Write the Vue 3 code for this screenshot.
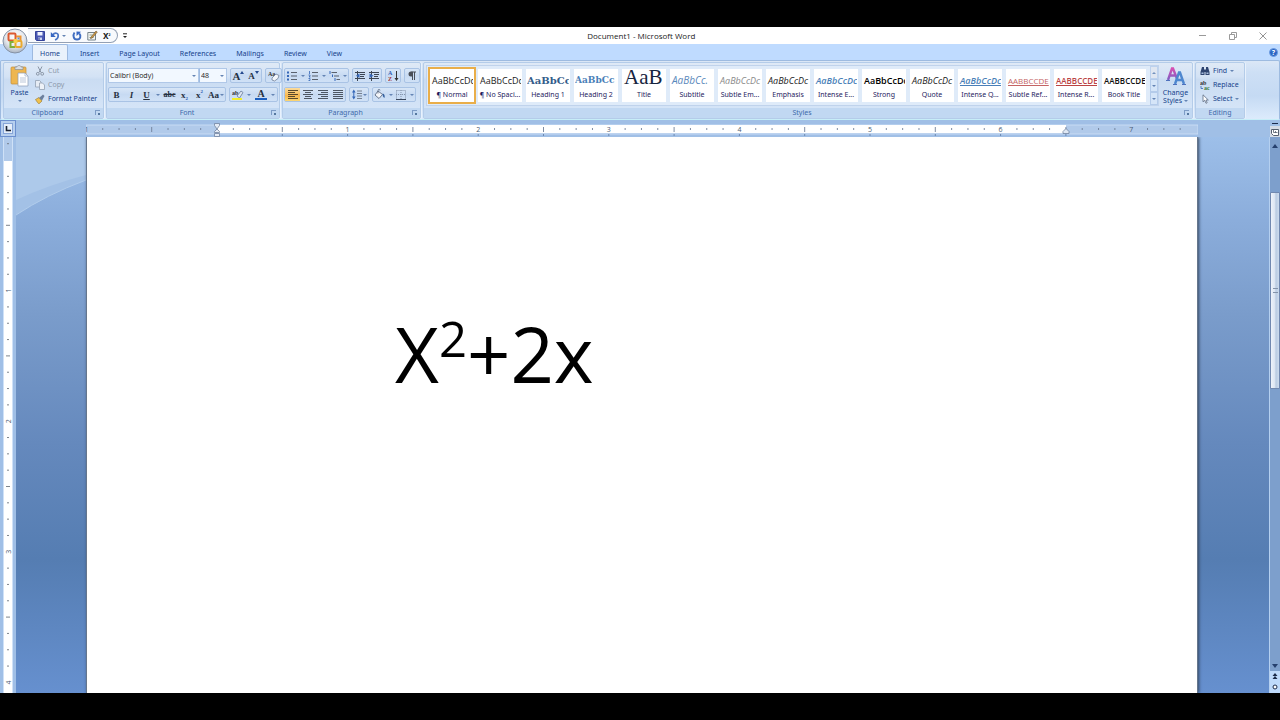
<script setup>
import { ref } from 'vue'

const tabs = ['Home', 'Insert', 'Page Layout', 'References', 'Mailings', 'Review', 'View']
const fontName = ref('Calibri (Body)')
const fontSize = ref('48')

const styles = [
  { name: '¶ Normal', sample: 'AaBbCcDc', kind: 'plain', on: true },
  { name: '¶ No Spaci...', sample: 'AaBbCcDc', kind: 'plain' },
  { name: 'Heading 1', sample: 'AaBbCc', kind: 'h1' },
  { name: 'Heading 2', sample: 'AaBbCc', kind: 'h2' },
  { name: 'Title', sample: 'AaB', kind: 'title' },
  { name: 'Subtitle', sample: 'AaBbCc.', kind: 'subtitle' },
  { name: 'Subtle Em...', sample: 'AaBbCcDc', kind: 'subtle' },
  { name: 'Emphasis', sample: 'AaBbCcDc', kind: 'emph' },
  { name: 'Intense E...', sample: 'AaBbCcDc', kind: 'intense' },
  { name: 'Strong', sample: 'AaBbCcDc', kind: 'strong' },
  { name: 'Quote', sample: 'AaBbCcDc', kind: 'emph' },
  { name: 'Intense Q...', sample: 'AaBbCcDc', kind: 'intense lined' },
  { name: 'Subtle Ref...', sample: 'AABBCCDE', kind: 'ref' },
  { name: 'Intense R...', sample: 'AABBCCDE', kind: 'ref heavy' },
  { name: 'Book Title', sample: 'AABBCCDE', kind: 'book' },
]

const inch = 130.6
function ticks(from, to) {
  const out = []
  for (let i = from; i <= to; i++) {
    out.push({ at: (i * inch) / 8, half: i % 4 === 0, num: i % 8 === 0 && i !== 0 ? Math.abs(i / 8) : 0, zero: i === 0 })
  }
  return out
}
const across = ticks(-8, 59)
const down = ticks(-1, 33)
</script>

<template>
  <div class="screen">
    <div class="window">
      <header class="titlebar">
        <button class="office" aria-label="Office Button">
          <svg viewBox="0 0 26 26" width="26" height="26">
            <defs>
              <radialGradient id="orb" cx=".5" cy=".35" r=".65">
                <stop offset="0" stop-color="#fff" /><stop offset=".6" stop-color="#e4e7ec" /><stop offset="1" stop-color="#a9b3c2" />
              </radialGradient>
            </defs>
            <circle cx="13" cy="13" r="12" fill="url(#orb)" stroke="#8592a6" />
            <g fill="none" stroke-width="2">
              <rect x="6.500" y="5.500" width="7" height="7" rx="1" stroke="#dc5a31" />
              <path d="M14 8.500h4.500v4.500H15" stroke="#ec9432" />
              <path d="M12 14H8.500v5h4.500" stroke="#7fae3a" />
              <rect x="13.500" y="13" width="6" height="6" rx="1" stroke="#e9a92f" />
            </g>
            <rect x="11.500" y="11" width="4" height="4" fill="#f7d04a" />
            <path d="M15.500 9.500h2v2h-2z" fill="#5b93d0" />
          </svg>
        </button>
        <div class="quick">
          <button aria-label="Save">
            <svg viewBox="0 0 10 10" width="10" height="10"><path d="M.5.5h9v9h-8l-1-1z" fill="#4a58b4" stroke="#34439a" /><path d="M2.500 1h5v3.500h-5z" fill="#eef2ff" /><path d="M3 6.500h4V9H3z" fill="#c9d2ef" /><path d="M3.500 7h1v2h-1z" fill="#273583" /></svg>
          </button>
          <button aria-label="Undo">
            <svg viewBox="0 0 10 10" width="10" height="10"><path d="M2.500 4C5 1 8.500 2 8.200 5 8 7.500 6.500 8.500 5 9" fill="none" stroke="#4a75c4" stroke-width="1.700" /><path d="M.8 1v5h5z" fill="#3767c3" /></svg>
          </button>
          <button class="slim" aria-label="Undo list"><i class="caret"></i></button>
          <button aria-label="Repeat">
            <svg viewBox="0 0 10 10" width="10" height="10"><path d="M2.500 1.500C.8 4 1.200 8.400 5 8.500 8.800 8.400 9.200 4.500 7.200 2.500" fill="none" stroke="#3f6dc0" stroke-width="1.900" /><path d="M4.500.5v4.500L9 .8z" fill="#3767c3" /></svg>
          </button>
          <button aria-label="Edit">
            <svg viewBox="0 0 11 11" width="11" height="11"><path d="M.8 2.500h7.700v7.500H.8z" fill="#f3f5f2" stroke="#76838a" /><path d="M2.500 5h3M2.500 7.500h4" stroke="#8fa08f" /><path d="M4 7l5-6 1.300 1-5 6L3.500 8.500z" fill="#d09a40" stroke="#66533a" stroke-width=".6" /></svg>
          </button>
          <button class="glyph" aria-label="Superscript">x<sup>²</sup></button>
        </div>
        <button class="more" aria-label="Customize toolbar">
          <svg viewBox="0 0 6 6" width="6" height="6"><path d="M1 .8h4" stroke="#222" /><path d="M1 3h4L3 5z" fill="#222" /></svg>
        </button>
        <h1>Document1 - Microsoft Word</h1>
        <div class="controls">
          <button aria-label="Minimize"><svg viewBox="0 0 8 8" width="8" height="8"><path d="M0 3.500h7" stroke="#999" /></svg></button>
          <button aria-label="Restore"><svg viewBox="0 0 8 8" width="8" height="8"><path d="M.5 2.500h5v5h-5zM2.500 2V.5h5v5H6" fill="none" stroke="#999" /></svg></button>
          <button aria-label="Close"><svg viewBox="0 0 8 8" width="8" height="8"><path d="M.5.5l7 7M7.500.5l-7 7" stroke="#888" stroke-width=".9" /></svg></button>
        </div>
      </header>

      <nav class="tabs">
        <button v-for="(t, i) in tabs" :key="t" :class="{ active: i === 0 }">{{ t }}</button>
        <button class="help" aria-label="Help">?</button>
      </nav>

      <section class="ribbon">
        <div class="group clipboard">
          <div class="body">
            <button class="paste">
              <svg viewBox="0 0 20 22" width="20" height="22"><rect x="1" y="2" width="15" height="17" rx="1" fill="#eeb64f" stroke="#c18e3a" stroke-width=".7" /><path d="M5 3.500V2h2c0-2 4-2 4 0h2v2.500H5z" fill="#d9dde2" stroke="#7c8591" stroke-width=".6" /><path d="M8 8h7l3 3v10H8z" fill="#fff" stroke="#8b9cb6" stroke-width=".7" /><path d="M15 8v3h3M10 13h6M10 15h6M10 17h6" fill="none" stroke="#9fb0c9" stroke-width=".7" /></svg>
              <span>Paste</span>
              <i class="caret"></i>
            </button>
            <div class="list">
              <button class="off"><svg viewBox="0 0 10 10" width="10" height="10"><path d="M3 .5l3 6M7 .5l-3 6" stroke="#8a96a6" /><circle cx="2.800" cy="7.800" r="1.400" fill="none" stroke="#8a96a6" /><circle cx="7.200" cy="7.800" r="1.400" fill="none" stroke="#8a96a6" /></svg>Cut</button>
              <button class="off"><svg viewBox="0 0 10 10" width="10" height="10"><path d="M.5.5h4l1.500 1.500v5H.5z" fill="#e6ecf4" stroke="#94a1b3" stroke-width=".8" /><path d="M4.500 3h3l2 2v4.500h-5z" fill="#eef2f8" stroke="#94a1b3" stroke-width=".8" /></svg>Copy</button>
              <button><svg viewBox="0 0 10 10" width="10" height="10"><path d="M.5 5.500L4 3.500l3 3.500-3 2.800c-1-.4-2-2-3.500-4.300z" fill="#f1c14e" stroke="#94762c" stroke-width=".6" /><path d="M4 4l4-3.500L9.500 2 7 6.500z" fill="#6b7f9d" /></svg>Format Painter</button>
            </div>
          </div>
          <footer>Clipboard<i class="launch"></i></footer>
        </div>

        <div class="group font">
          <div class="body rows">
            <div class="row">
              <div class="combos">
                <label class="pick name"><select v-model="fontName" aria-label="Font"><option>Calibri (Body)</option></select><i class="caret"></i></label>
                <label class="pick size"><select v-model="fontSize" aria-label="Font size"><option>48</option></select><i class="caret"></i></label>
              </div>
              <div class="set">
                <button class="serif big" aria-label="Grow font">A<svg viewBox="0 0 4 4" width="4" height="4"><path d="M0 3l2-3 2 3z" fill="#244a8f" /></svg></button>
                <button class="serif" aria-label="Shrink font">A<svg viewBox="0 0 4 4" width="4" height="4"><path d="M0 0h4L2 3z" fill="#244a8f" /></svg></button>
              </div>
              <div class="set">
                <button aria-label="Clear formatting"><svg viewBox="0 0 12 12" width="12" height="12"><text x="0" y="6" class="tiny">Aa</text><path d="M4 8l4-4 3 1.500-1 3L6.500 11 4 10z" fill="#f3f6fb" stroke="#6f7f98" stroke-width=".8" /></svg></button>
              </div>
            </div>
            <div class="row">
              <div class="set">
                <button class="serif bold">B</button>
                <button class="serif ital">I</button>
                <button class="serif under">U</button>
                <button class="slim" aria-label="Underline style"><i class="caret"></i></button>
                <button class="serif strike">abc</button>
                <button class="serif">x<sub>2</sub></button>
                <button class="serif">x<sup>2</sup></button>
                <button class="serif wide">Aa<i class="caret"></i></button>
              </div>
              <div class="set">
                <button aria-label="Highlight"><svg viewBox="0 0 12 12" width="12" height="12"><text x="0" y="6" class="tiny">ab</text><path d="M5 7l4-5 2 1.500L7.500 9z" fill="#dfe6f2" stroke="#566b8c" stroke-width=".7" /><path d="M0 9h10v2H0z" fill="#f2ee2b" /></svg></button>
                <button class="slim" aria-label="Highlight color"><i class="caret"></i></button>
                <button class="serif ink">A</button>
                <button class="slim" aria-label="Font color list"><i class="caret"></i></button>
              </div>
            </div>
          </div>
          <footer>Font<i class="launch"></i></footer>
        </div>

        <div class="group para">
          <div class="body rows">
            <div class="row">
              <div class="set">
                <button aria-label="Bullets"><svg viewBox="0 0 10 10" width="10" height="10"><path d="M0 1.500h2M0 5h2M0 8.500h2" stroke="#3567b8" stroke-width="1.800" /><path d="M4 1.500h6M4 5h6M4 8.500h6" stroke="#59616d" /></svg></button>
                <button class="slim" aria-label="Bullet list"><i class="caret"></i></button>
                <button aria-label="Numbering"><svg viewBox="0 0 10 10" width="10" height="10"><path d="M1.500 0v3M.5 4h1.500v1l-1 1h1.500M.5 7.500h1.500v2H.5" fill="none" stroke="#3567b8" stroke-width=".8" /><path d="M4 1.500h6M4 5h6M4 8.500h6" stroke="#59616d" /></svg></button>
                <button class="slim" aria-label="Numbering list"><i class="caret"></i></button>
                <button aria-label="Multilevel list"><svg viewBox="0 0 11 10" width="11" height="10"><path d="M1 0v3M3.500 3.500v2.500M6 7v3" stroke="#3567b8" /><path d="M2.500 1.500H8M5 5h5M7.500 8.500H11" stroke="#59616d" /></svg></button>
                <button class="slim" aria-label="Multilevel options"><i class="caret"></i></button>
              </div>
              <div class="set">
                <button aria-label="Decrease indent"><svg viewBox="0 0 10 10" width="10" height="10"><path d="M0 1.500h10M5 3.500h5M5 5.500h4M0 7.500h10M2.500 0v10" stroke="#3d4653" /><path d="M4.500 2.500v4.500L1 4.800z" fill="#3567b8" /></svg></button>
                <button aria-label="Increase indent"><svg viewBox="0 0 10 10" width="10" height="10"><path d="M0 1.500h10M5 3.500h5M5 5.500h4M0 7.500h10M2.500 0v10" stroke="#3d4653" /><path d="M.5 2.500v4.500L4.500 4.800z" fill="#3567b8" /></svg></button>
              </div>
              <div class="set">
                <button aria-label="Sort"><svg viewBox="0 0 11 12" width="11" height="12"><text x="0" y="5" class="tiny blue">A</text><text x="0" y="11" class="tiny red">Z</text><path d="M8.500 1v9" stroke="#333" /><path d="M6.500 8h4l-2 3z" fill="#333" /></svg></button>
              </div>
              <div class="set"><button class="mark" aria-label="Show marks"><svg viewBox="0 0 8 10" width="8" height="10"><path d="M3.500 1H8M4.500 1v8M6.500 1v8" stroke="#4a4f58" /><path d="M4.500.5v5H3A2.500 2.500 0 0 1 3 .5z" fill="#4a4f58" /></svg></button></div>
            </div>
            <div class="row">
              <div class="set aligns">
                <button class="chosen" aria-label="Align left"><svg viewBox="0 0 10 9" width="10" height="9"><path d="M0 .5h10M0 2.500h7M0 4.500h10M0 6.500h7M0 8.500h10" stroke="#5c4a2c" /></svg></button>
                <button aria-label="Center"><svg viewBox="0 0 10 9" width="10" height="9"><path d="M0 .5h10M2 2.500h6M0 4.500h10M2 6.500h6M1 8.500h8" stroke="#4d5663" /></svg></button>
                <button aria-label="Align right"><svg viewBox="0 0 10 9" width="10" height="9"><path d="M0 .5h10M3 2.500h7M0 4.500h10M3 6.500h7M0 8.500h10" stroke="#4d5663" /></svg></button>
                <button aria-label="Justify"><svg viewBox="0 0 10 9" width="10" height="9"><path d="M0 .5h10M0 2.500h10M0 4.500h10M0 6.500h10M0 8.500h10" stroke="#4d5663" /></svg></button>
              </div>
              <div class="set">
                <button class="wide" aria-label="Line spacing"><svg viewBox="0 0 10 11" width="10" height="11"><path d="M1.800 2v7" stroke="#3567b8" /><path d="M0 3.500L1.800.5l1.800 3zM0 7.500l1.800 3 1.800-3z" fill="#3567b8" /><path d="M5 2h5M5 4.500h5M5 7h5M5 9.500h5" stroke="#6b7583" stroke-width=".9" /></svg><i class="caret"></i></button>
              </div>
              <div class="set">
                <button aria-label="Shading"><svg viewBox="0 0 12 11" width="12" height="11"><path d="M4 2l4.500 3.500L5 9.500 1 6z" fill="#f4f6fa" stroke="#5c6b82" stroke-width=".9" /><path d="M4 4.500V1.500c0-1.500 2-1.500 2 0" fill="none" stroke="#5c6b82" stroke-width=".8" /><path d="M8.500 4.500c2 .5 2.500 2 2 4.500-1.500-1-2-2.500-2-4.500z" fill="#35619f" /></svg></button>
                <button class="slim" aria-label="Shading color"><i class="caret"></i></button>
                <button aria-label="Borders"><svg viewBox="0 0 10 10" width="10" height="10"><path d="M.5.5h9v9M.5.500v9M5 0v9M0 4.500h10" fill="none" stroke="#8494ac" stroke-dasharray="1 1" /><path d="M0 9.500h10" stroke="#39475d" /></svg></button>
                <button class="slim" aria-label="Border list"><i class="caret"></i></button>
              </div>
            </div>
          </div>
          <footer>Paragraph<i class="launch"></i></footer>
        </div>

        <div class="group styles">
          <div class="body">
            <div class="gallery">
              <button v-for="s in styles" :key="s.name" class="cell" :class="{ on: s.on }">
                <span class="sample" :class="s.kind">{{ s.sample }}</span>
                <span class="label">{{ s.name }}</span>
              </button>
              <div class="scroller">
                <button class="dim" aria-label="Scroll up"><i class="caret up"></i></button>
                <button aria-label="Scroll down"><i class="caret"></i></button>
                <button aria-label="More styles"><i class="caret lined-top"></i></button>
              </div>
            </div>
            <button class="change">
              <svg viewBox="0 0 20 20" width="20" height="20"><defs><linearGradient id="pinkA" x2="0" y2="1"><stop stop-color="#d64fb2" /><stop offset="1" stop-color="#7d5fc4" /></linearGradient></defs><path d="M2 14L6 2.500h1L11.500 14M3.500 9.500h6" fill="none" stroke="url(#pinkA)" stroke-width="2.400" /><path d="M9 18L13 6.500h1L18 18M10.500 14h7" fill="none" stroke="#4e87cf" stroke-width="2.400" /><path d="M7 18.500h4M16 18.500h4M0 14.500h4" stroke="#4e70bd" /></svg>
              <span>Change</span>
              <span>Styles <i class="caret"></i></span>
            </button>
          </div>
          <footer>Styles<i class="launch"></i></footer>
        </div>

        <div class="group editing">
          <div class="body list">
            <button><svg viewBox="0 0 10 10" width="10" height="10"><path d="M2 1h2v2l1 1 1-1V1h2l1.500 5v3h-4V6h-1v3h-4V6z" fill="#2e4470" /><path d="M1.500 6.500h2v1.500h-2zM6.500 6.500h2v1.500h-2z" fill="#a9bfdf" /></svg>Find <i class="caret"></i></button>
            <button><svg viewBox="0 0 10 10" width="10" height="10"><text x="0" y="5" class="tiny">ab</text><text x="4" y="10" class="tiny green">ac</text><path d="M1 6v2.500h2" fill="none" stroke="#3567b8" stroke-width=".8" /></svg>Replace</button>
            <button><svg viewBox="0 0 10 10" width="10" height="10"><path d="M3 .8v7l1.700-1.500L6 9.300l1.200-.6L6 6h2.300z" fill="#fff" stroke="#5b6a82" stroke-width=".8" /></svg>Select <i class="caret"></i></button>
          </div>
          <footer>Editing</footer>
        </div>
      </section>

      <main class="work">
        <div class="corner"><button aria-label="Tab selector"><svg viewBox="0 0 6 6" width="6" height="6"><path d="M1.500 0v4.500H6" fill="none" stroke="#1a2233" stroke-width="1.600" /></svg></button></div>
        <div class="hruler">
          <div class="scale">
            <svg width="100%" height="17">
              <rect x="0" y="5" width="100%" height="9" fill="#b1caea" stroke="#cfe1f7" stroke-width=".8" />
              <rect x="131" y="5" width="849" height="8" fill="#fff" />
              <g transform="translate(131 0)">
                <template v-for="t in across" :key="t.at">
                  <text v-if="t.num" :x="t.at" y="12" class="num">{{ t.num }}</text>
                  <path v-else-if="!t.zero" :d="t.half ? `M${t.at} 7v5` : `M${t.at} 8v2`" stroke="#6f7f98" stroke-width=".9" />
                </template>
                <path v-for="n in 13" :key="n" :d="`M${n * 65.3} 14v2`" stroke="#6c88b0" />
                <path d="M-2.500 3.500h5v2L0 9l-2.500-3.500zM0 9l2.500 2.500v1h-5v-1zM-2.500 13.500h5v3h-5z" fill="#e4ebf5" stroke="#71839f" stroke-width=".8" />
                <path d="M849 8.500l3 3v2h-6v-2z" fill="#dfe8f4" stroke="#71839f" stroke-width=".8" />
              </g>
            </svg>
          </div>
        </div>
        <div class="split"><b></b><button aria-label="View ruler"><svg viewBox="0 0 8 8" width="8" height="8"><path d="M.5 1.500h7v6h-5l-2-2z" fill="#fff" stroke="#56606f" /><path d="M2.500 2v2.500h4M4.500 3v2" fill="none" stroke="#56606f" stroke-width=".8" /></svg></button></div>
        <div class="vruler">
          <svg width="16" height="100%">
            <rect x="3" y="0" width="10" height="100%" fill="#cfe1f7" />
            <rect x="4" y="0" width="8" height="24" fill="#b1caea" />
            <rect x="4" y="24" width="8" height="100%" fill="#fff" />
            <g transform="translate(8 23)">
              <template v-for="t in down" :key="t.at">
                <text v-if="t.num" class="num" :transform="`translate(3 ${t.at}) rotate(-90)`">{{ t.num }}</text>
                <path v-else-if="!t.zero" :d="t.half ? `M-2 ${t.at}h4` : `M-1 ${t.at}h2`" stroke="#6f7780" stroke-width=".9" />
              </template>
            </g>
          </svg>
        </div>
        <div class="canvas">
          <svg class="swoosh" viewBox="0 0 70 80" width="70" height="80">
            <path d="M0 0h70v43Q30 58 0 78z" fill="#a3c1e6" />
            <path d="M0 0h70v38Q32 48 0 63z" fill="#adc9ea" />
            <path d="M0 78Q30 58 70 43" fill="none" stroke="#b2cdec" />
          </svg>
          <article class="page">
            <p contenteditable="true" spellcheck="false">X<sup>2</sup>+2x</p>
          </article>
        </div>
        <div class="vscroll">
          <button class="up" aria-label="Scroll up"><i class="caret up"></i></button>
          <div class="track"><div class="thumb"><i></i></div></div>
          <button class="down" aria-label="Scroll down"><i class="caret"></i></button>
          <div class="browse">
            <button aria-label="Previous page"><svg viewBox="0 0 6 7" width="6" height="7"><path d="M3 0l2.500 3h-5zM3 3l2.500 3h-5z" fill="#1c2b4a" /></svg></button>
            <button aria-label="Browse object"><svg viewBox="0 0 6 7" width="6" height="7"><circle cx="3" cy="3" r="2" fill="#fff" stroke="#1c2b4a" /></svg></button>
          </div>
        </div>
      </main>
    </div>
  </div>
</template>

<style>
body { background: #000; }
</style>

<style scoped>
* { box-sizing: border-box; }
.screen { height: 100vh; padding: 27px 0; background: #000; display: flex; flex-direction: column; font: 7px/10px "Noto Sans", "Open Sans", sans-serif; color: #15428b; }
.window { flex: 1; min-height: 0; display: flex; flex-direction: column; overflow: hidden; background: #bfdbff; }
button { display: flex; align-items: center; justify-content: center; padding: 0; margin: 0; border: 0; background: none; font: inherit; color: inherit; }
svg { display: block; flex: none; }
.caret { display: inline-block; flex: none; border: 2px solid transparent; border-top-color: #6484b4; border-bottom: 0; }
.caret.up { border-top: 0; border-bottom: 2px solid #4b6fa6; }
.tiny { font: bold 6px "Liberation Serif", serif; fill: #333; }
.tiny.blue { fill: #2d5ab3; }
.tiny.red { fill: #a23333; }
.tiny.green { fill: #3b7c3b; }
.num { font: 7px "Open Sans", sans-serif; fill: #4c5b72; text-anchor: middle; }

.titlebar { position: relative; height: 17px; flex: none; display: flex; align-items: center; background: #fff; }
.office { position: absolute; left: 2px; top: 1px; z-index: 2; }
.quick { height: 15px; margin-left: 28px; padding: 0 6px 0 7px; display: flex; align-items: center; gap: 5px; border: 1px solid #93a0b4; border-left: 0; border-radius: 0 8px 8px 0; background: #f8fafd; }
.quick .slim { margin: 0 1px 0 -3px; }
.glyph { font: bold 10px/10px "Liberation Sans", sans-serif; color: #222; }
.glyph sup { font-size: 6px; line-height: 6px; }
.more { margin-left: 4px; }
h1 { flex: 1; margin: 0; padding-right: 44px; font: 8px/12px "Open Sans", sans-serif; color: #222; text-align: center; }
.controls { display: flex; gap: 22px; margin-right: 13px; }

.tabs { height: 16px; flex: none; display: flex; align-items: stretch; padding: 0 2px 0 32px; gap: 4px; background: #bfdbff; }
.tabs button { padding: 3px 8px 0; }
.tabs .active { border: 1px solid #9db9df; border-bottom: 0; border-radius: 2px 2px 0 0; background: #e9f1fb; padding: 2px 7px 0; }
.tabs .help { margin: 4px 0 0 auto; width: 9px; height: 9px; padding: 0; border-radius: 50%; background: #2c66c4; color: #fff; font-weight: bold; border: 1px solid #6c9be0; }

.ribbon { flex: none; height: 60px; display: flex; gap: 2px; padding: 1px 2px 0; border: 1px solid #9ebbe0; border-bottom-color: #c7eef8; border-radius: 2px; background: linear-gradient(#dbe7f6, #cddff5 20%, #c5daf3 60%, #dcebfc); }
.group { display: flex; flex-direction: column; border: 1px solid #b4cce9; border-radius: 2px; background: linear-gradient(#dfe9f6, #d3e2f5 25%, #cadcf2 30%, #d8e7f9); box-shadow: 1px 0 0 #e8f1fc; }
.group .body { flex: 1; min-height: 0; display: flex; }
.group footer { position: relative; flex: none; height: 10px; padding-right: 12px; text-align: center; background: #c1d8f2; color: #3e6aaa; }
.launch { position: absolute; right: 3px; top: 2px; width: 5px; height: 5px; border: 1px solid #7d9cc6; border-width: 1px 0 0 1px; }
.launch::after { content: ""; position: absolute; right: 0; bottom: 0; width: 2px; height: 2px; background: #55789f; }
.clipboard { width: 101px; }
.font { width: 174px; }
.para { width: 139px; }
.styles { flex: 1; min-width: 0; }
.editing { width: 50px; margin-right: 32px; }
.group.editing footer { padding-right: 0; }

.paste { width: 31px; flex-direction: column; justify-content: flex-start; padding-top: 2px; }
.paste svg { margin-bottom: 1px; }
.paste .caret { margin-top: 2px; }
.list { display: flex; flex-direction: column; padding-top: 1px; }
.list button { height: 14px; justify-content: flex-start; gap: 3px; white-space: nowrap; }
.list .off { color: #8d9aab; }
.clipboard .list, .editing .list { gap: 0; padding-top: 1px; }
.group .body.list { padding: 1px 0 0 4px; }

.rows { flex-direction: column; gap: 4px; padding: 5px 2px 0 1px; }
.row { display: flex; gap: 3px; height: 15px; }
.combos { display: flex; }
.pick { position: relative; display: flex; align-items: center; background: #f2f8ff; border: 1px solid #b0c8e8; }
.pick + .pick { border-left-color: #9fbbe1; }
.pick .caret { position: absolute; right: 2px; pointer-events: none; }
.pick select { appearance: none; border: 0; margin: 0; padding: 0 1px; width: 100%; height: 100%; background: none; font: 7px/10px "Open Sans", sans-serif; color: #222; }
.name { width: 91px; }
.size { width: 28px; }
.set { display: flex; border: 1px solid #a9c3e5; border-radius: 2px; background: linear-gradient(#d8e6f7, #c7daf2 50%, #d0e1f6); }
.set button { width: 15px; }
.set .slim { width: 8px; }
.set .wide { width: 18px; gap: 1px; }
.para .set button { width: 14px; }
.para .set .slim { width: 7px; }
.para .set .wide { width: 18px; }
.para .aligns button { width: 15px; }
.set .chosen { background: linear-gradient(#fbdc9d, #f8b74f 60%, #fbd775); }
.serif { font: bold 9px/12px "Liberation Serif", serif; color: #26303f; }
.serif.big { font-size: 11px; }
.serif svg { align-self: flex-start; margin-top: 2px; }
.serif sub, .serif sup { font-size: 5px; line-height: 5px; color: #2d5ab3; }
.serif sub { align-self: flex-end; }
.serif sup { align-self: flex-start; margin-top: 1px; }
.ital { font-style: italic; }
.under { text-decoration: underline; }
.strike { font-size: 8px; text-decoration: line-through; }
.set .ink { width: 12px; height: 11px; margin: 1px 2px 0; border-bottom: 2px solid #1c5fbf; font-size: 10px; line-height: 8px; }

.gallery { flex: 1; min-width: 0; display: flex; gap: 4px; margin: 2px 0 2px 2px; padding-left: 3px; border: 1px solid #c0d3ec; background: #dfebf9; }
.cell { flex: 1; min-width: 0; margin: 3px 0; flex-direction: column; justify-content: flex-start; overflow: hidden; background: #fff; white-space: nowrap; }
.cell.on { outline: 2px solid #e9ae4a; outline-offset: 0; }
.sample { width: calc(100% - 2px); height: 21px; padding-left: 1px; overflow: hidden; text-align: left; font: 9px/23px "Open Sans", sans-serif; color: #222; }
.label { font: 7px/10px "Noto Sans", sans-serif; color: #1e1b5e; }
.h1, .h2 { padding-left: 0; font-family: "DejaVu Serif", serif; font-weight: bold; }
.h1 { font-size: 10px; color: #335c8a; }
.h2 { font-size: 9px; color: #4a80b8; }
.title { font: 21px/17px "Liberation Serif", serif; color: #17253f; }
.subtitle { font-size: 10px; font-style: italic; color: #5a88bb; }
.subtle { font-style: italic; color: #8a8a8a; }
.emph { font-style: italic; }
.intense { font-style: italic; font-weight: 600; color: #4a7fb8; }
.lined { text-decoration: underline; }
.strong { font-weight: 600; color: #000; }
.ref { font-size: 8px; text-decoration: underline; color: #c46464; }
.heavy { font-weight: 600; color: #bb4444; }
.book { font-size: 8px; font-weight: 600; color: #111; }
.scroller { width: 8px; flex: none; display: flex; flex-direction: column; background: #d5e5f8; }
.scroller button { flex: 1; border: 1px solid #b4cbea; }
.scroller .dim { background: #e6e9ef; opacity: .7; }
.lined-top { box-shadow: 0 -3px 0 -2px #4b6fa6; }
.change { width: 33px; flex-direction: column; justify-content: flex-start; padding-top: 3px; line-height: 8px; }
.change svg { margin-bottom: 3px; }
.change .caret { margin-bottom: 1px; }

.work { flex: 1; min-height: 0; display: grid; grid-template: 17px minmax(0, 1fr) / 16px minmax(0, 1fr) 11px; background: #a0bfe6; }
.corner { border: 1px solid #6b8fce; padding: 2px; background: #b7cfee; }
.corner button { width: 100%; height: 100%; border: 1px solid #86a5d8; background: #e5eefa; }
.hruler { padding: 0 71px 0 70px; }
.scale { height: 17px; }
.split { display: flex; flex-direction: column; align-items: center; gap: 2px; padding-top: 3px; }
.split b { width: 6px; height: 1px; background: #1c2b4a; }
.split button { width: 10px; height: 11px; background: #d5dce6; }
.canvas { position: relative; display: flex; padding: 0 71px 0 70px; overflow: hidden; background: linear-gradient(#9dbfe9, #8baddb 15%, #7a9ccb 32%, #6589bd 55%, #557db2 76%, #6690cf); }
.swoosh { position: absolute; left: 0; top: 0; }
.page { position: relative; flex: 1; background: #fff; border: 0 solid #66768c; border-width: 0 1px; box-shadow: 1px 0 3px #33455f; }
.page p { margin: 161px 131px 0 308px; font: 500 76px/112px "Open Sans", sans-serif; color: #000; outline: 0; }
.page sup { font-size: 49px; line-height: 0; }
.vscroll { display: flex; flex-direction: column; border-left: 1px solid #b5d0f0; background: #7d9fcc; }
.vscroll .up, .vscroll .down { height: 11px; }
.vscroll .caret { border-width: 0 3px; border-top: 4px solid #25406e; }
.vscroll .up .caret { border-bottom: 4px solid #25406e; border-top: 0; }
.track { flex: 1; min-height: 0; padding-top: 44px; }
.thumb { height: 42%; display: flex; align-items: center; justify-content: center; border: 1px solid #7189b0; border-radius: 1px; background: linear-gradient(90deg, #eef3fa, #dbe5f2 50%, #b9cbe1 60%, #cddcee); }
.thumb i { width: 5px; height: 5px; border: 1px solid #8393aa; border-width: 1px 0; }
.browse { display: flex; flex-direction: column; height: 22px; background: #bfdafb; }
.browse button { flex: 1; }
</style>
